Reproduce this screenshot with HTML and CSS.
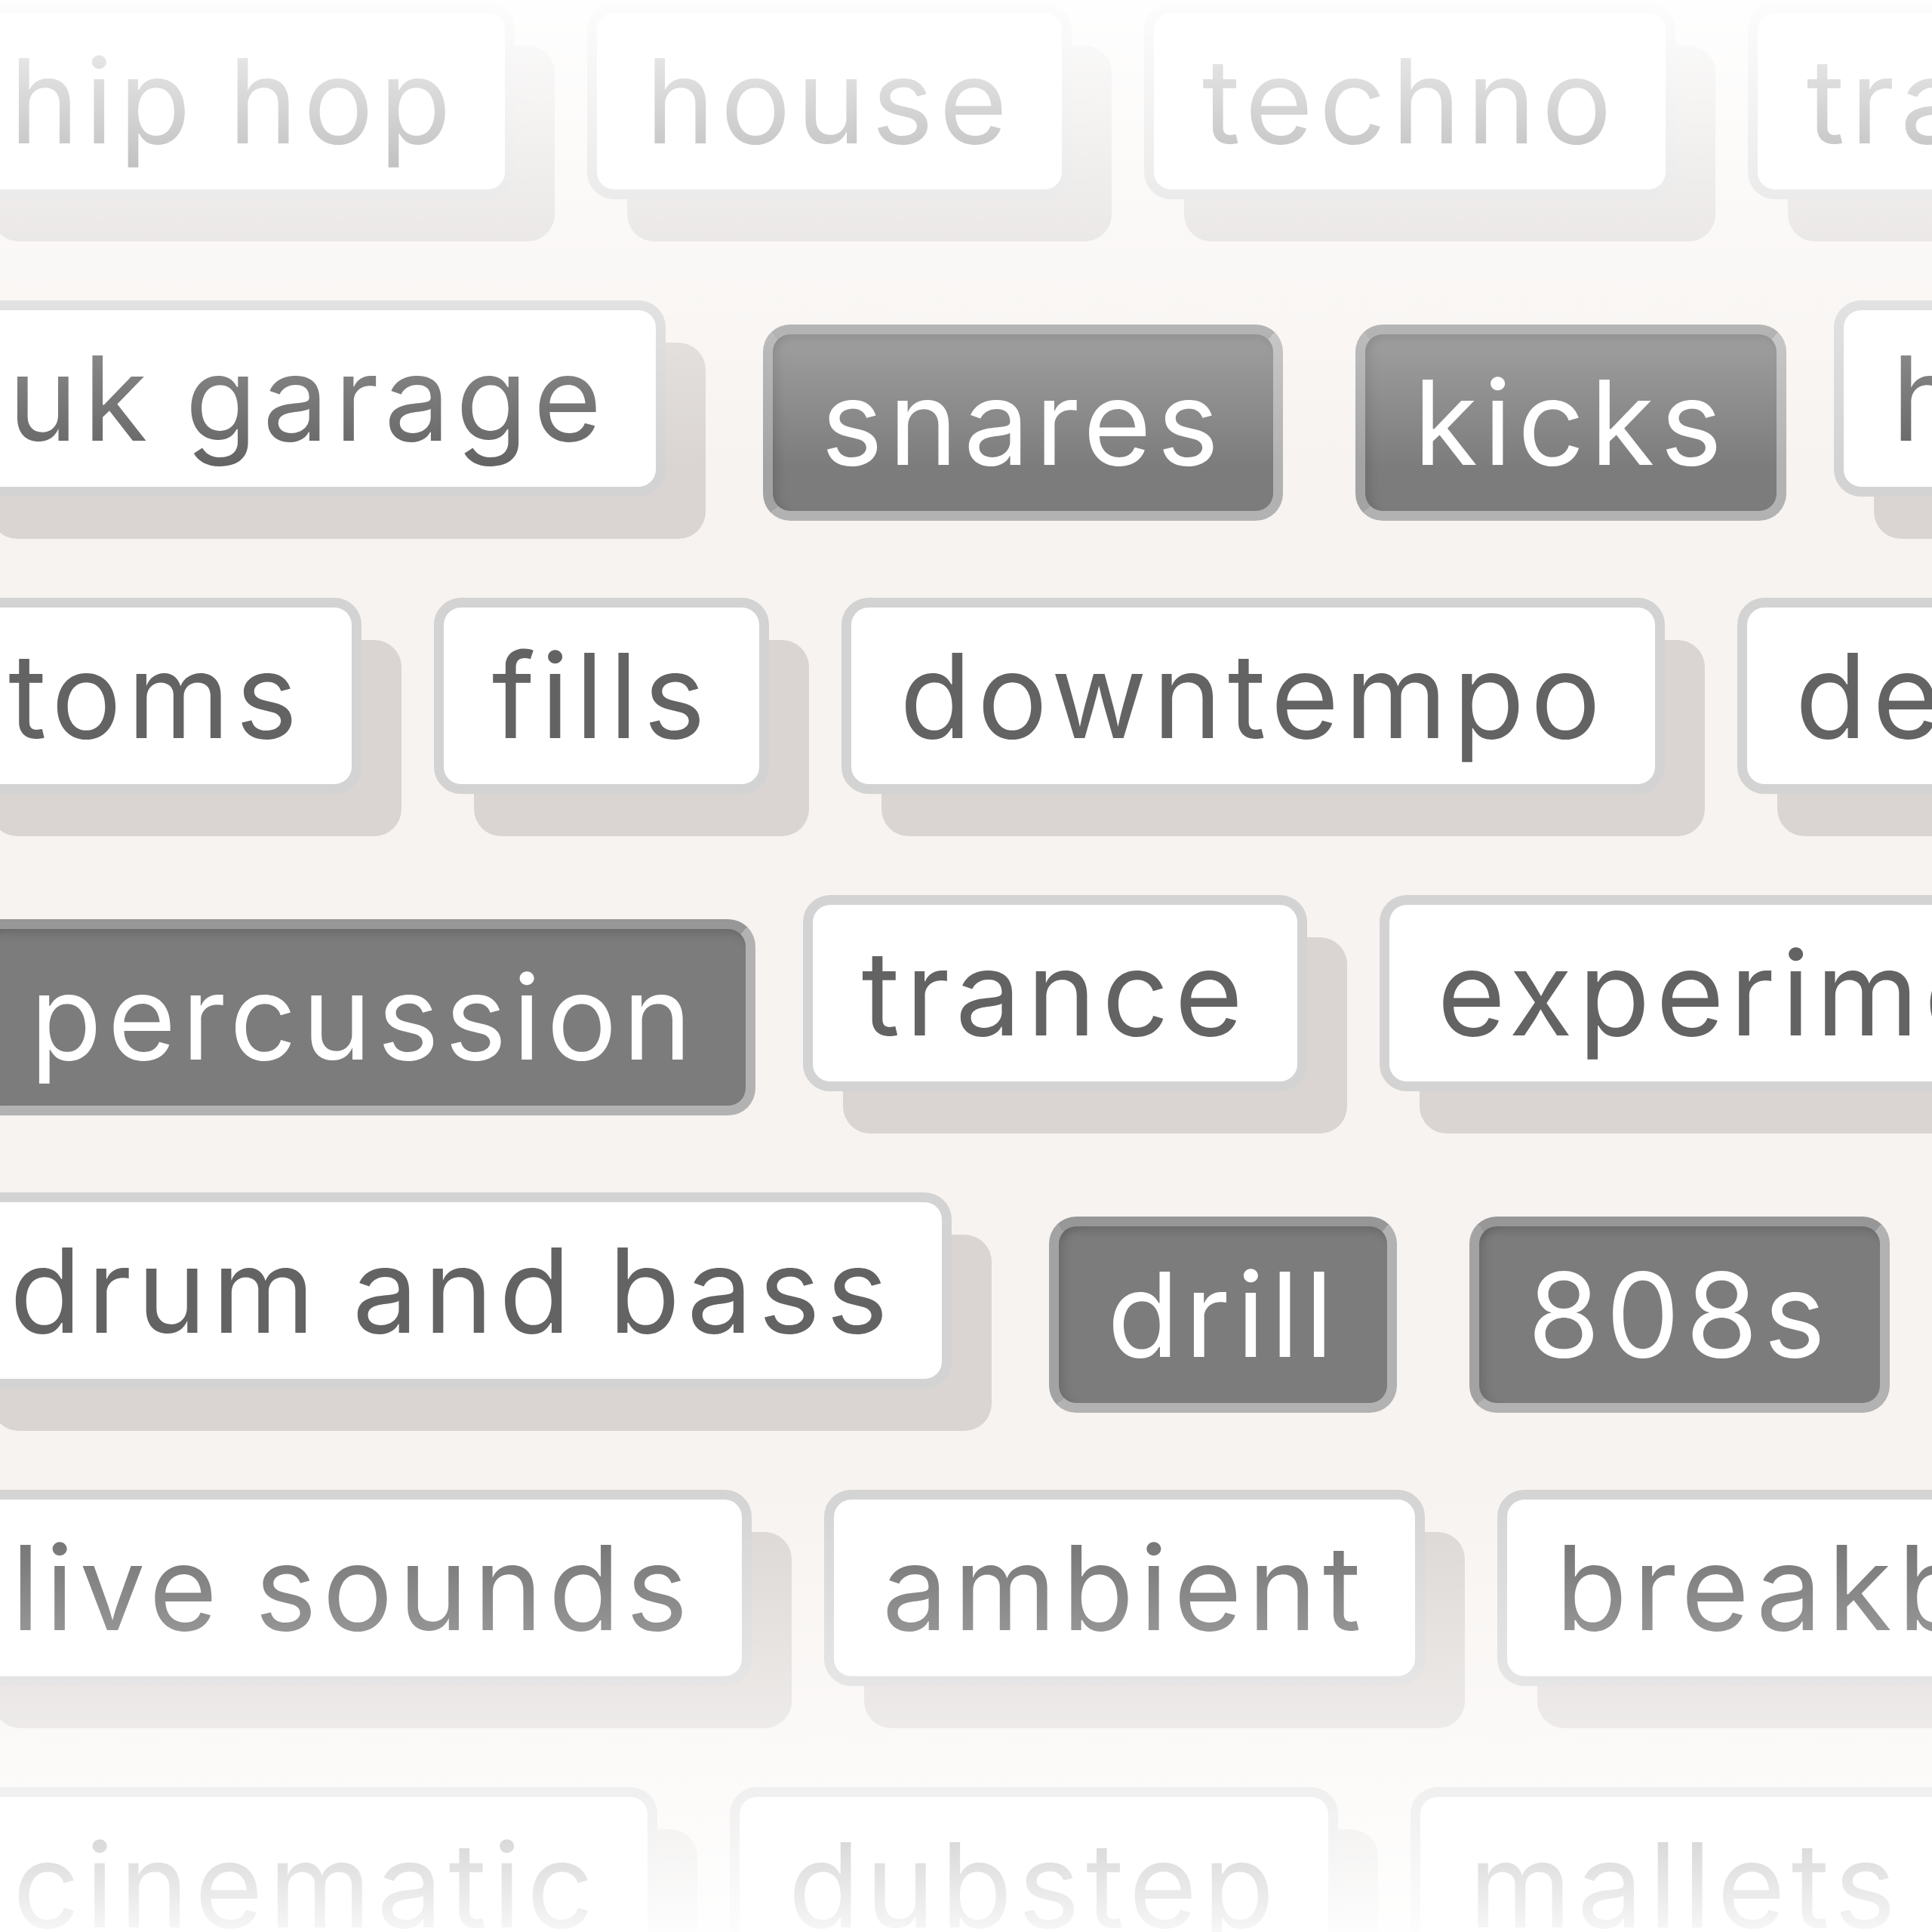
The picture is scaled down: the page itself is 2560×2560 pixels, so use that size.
FILE: index.html
```html
<!DOCTYPE html>
<html lang="en">
<head>
<meta charset="utf-8">
<title>Genres &amp; sounds</title>
<link rel="stylesheet" href="styles.css">
</head>
<body>
<main class="board">
  <div class="row r1">
    <span class="tag">hip hop</span>
    <span class="tag">house</span>
    <span class="tag">techno</span>
    <span class="tag">trap</span>
  </div>
  <div class="row r2">
    <span class="tag">uk garage</span>
    <span class="tag on">snares</span>
    <span class="tag on">kicks</span>
    <span class="tag">hats</span>
  </div>
  <div class="row r3">
    <span class="tag">toms</span>
    <span class="tag">fills</span>
    <span class="tag">downtempo</span>
    <span class="tag">deep house</span>
  </div>
  <div class="row r4">
    <span class="tag on">percussion</span>
    <span class="tag">trance</span>
    <span class="tag">experimental</span>
  </div>
  <div class="row r5">
    <span class="tag">drum and bass</span>
    <span class="tag on">drill</span>
    <span class="tag on">808s</span>
    <span class="tag">lo-fi</span>
  </div>
  <div class="row r6">
    <span class="tag">live sounds</span>
    <span class="tag">ambient</span>
    <span class="tag">breakbeat</span>
  </div>
  <div class="row r7">
    <span class="tag">cinematic</span>
    <span class="tag">dubstep</span>
    <span class="tag">mallets</span>
    <span class="tag">jazz</span>
  </div>
</main>
</body>
</html>
```
FILE: styles.css
```css
html, body {
  margin: 0;
  padding: 0;
}

body {
  width: 2560px;
  height: 2560px;
  overflow: hidden;
  background: #f7f3f0;
  font-family: Inter, "Liberation Sans", sans-serif;
}

.board {
  position: relative;
  width: 2560px;
  height: 2560px;
  overflow: hidden;
  display: flex;
  flex-direction: column;
  gap: 134px;
  padding-top: 4px;
  box-sizing: border-box;
}

/* soft white wash at the top and bottom edges */
.board::after {
  content: "";
  position: absolute;
  inset: 0;
  pointer-events: none;
  background: linear-gradient(
    to bottom,
    rgba(255, 255, 255, 0.95) 0px,
    rgba(255, 255, 255, 0) 620px,
    rgba(255, 255, 255, 0) 1960px,
    rgba(255, 255, 255, 0.95) 2560px
  );
}

.row {
  display: flex;
  gap: 96px;
  flex-shrink: 0;
  white-space: nowrap;
}

.r1 { margin-left: -64px; }
.r2 { margin-left: -66px; }
.r3 { margin-left: -66px; }
.r4 { margin-left: -70px; }
.r5 { margin-left: -64px; }
.r6 { margin-left: -62px; }
.r7 { margin-left: -60px; }

.tag {
  flex-shrink: 0;
  box-sizing: border-box;
  height: 260px;
  padding: 0 64px;
  border: 13px solid #d3d3d3;
  border-radius: 36px;
  background: #ffffff;
  color: #636363;
  font-size: 155px;
  font-weight: 400;
  letter-spacing: 0.05em;
  word-spacing: -9px;
  line-height: 234px;
  box-shadow: 53px 56px 0 #dad5d2;
}

/* selected tag: pushed down into its shadow */
.tag.on {
  transform: translate(33px, 32px);
  background: #7c7c7c;
  color: #ffffff;
  border-color: #b2b2b2;
  border-top-color: #979797;
  border-left-color: #a3a3a3;
  box-shadow:
    inset 0 18px 12px -12px rgba(0, 0, 0, 0.14),
    inset 18px 0 14px -12px rgba(0, 0, 0, 0.12);
}
```
